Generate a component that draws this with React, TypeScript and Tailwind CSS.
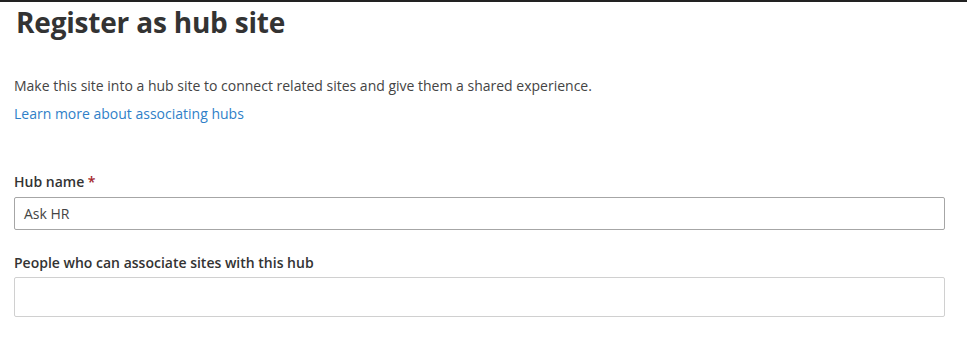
const App: React.FC = () => {
    return (
        <div className="w-[967px] h-[337px] bg-white border-t-2 border-[#222] overflow-hidden" style={{ fontFamily: '"Open Sans", "Noto Sans", sans-serif' }}>
            <div className="pl-[14px] pr-[22px]">
                {/* Title */}
                <h1 className="mt-[3px] pl-[2px] text-[28px] leading-[34px] font-bold text-[#333] tracking-[-0.2px]">Register as hub site</h1>

                {/* Description */}
                <p className="mt-[38px] text-[14px] leading-[18px] text-[#444]">
                    Make this site into a hub site to connect related sites and give them a shared experience.
                </p>
                <a href="#" className="block mt-[10px] text-[14px] leading-[18px] text-[#2f7fc8]">
                    Learn more about associating hubs
                </a>

                {/* Hub name */}
                <label className="block mt-[50px] text-[14px] leading-[18px] font-semibold text-[#333]">
                    Hub name <span className="text-[#a4262c]">*</span>
                </label>
                <div className="mt-[6px] h-[33px] border border-[#a6a6a6] rounded-[2px] flex items-center px-[9px] text-[14px] text-[#444]">
                    Ask HR
                </div>

                {/* People */}
                <label className="block mt-[24px] text-[14px] leading-[18px] font-semibold text-[#333]">
                    People who can associate sites with this hub
                </label>
                <div className="mt-[5px] h-[40px] border border-[#d0d0d0] rounded-[2px]"></div>
            </div>
        </div>
    );
};

export default App;
